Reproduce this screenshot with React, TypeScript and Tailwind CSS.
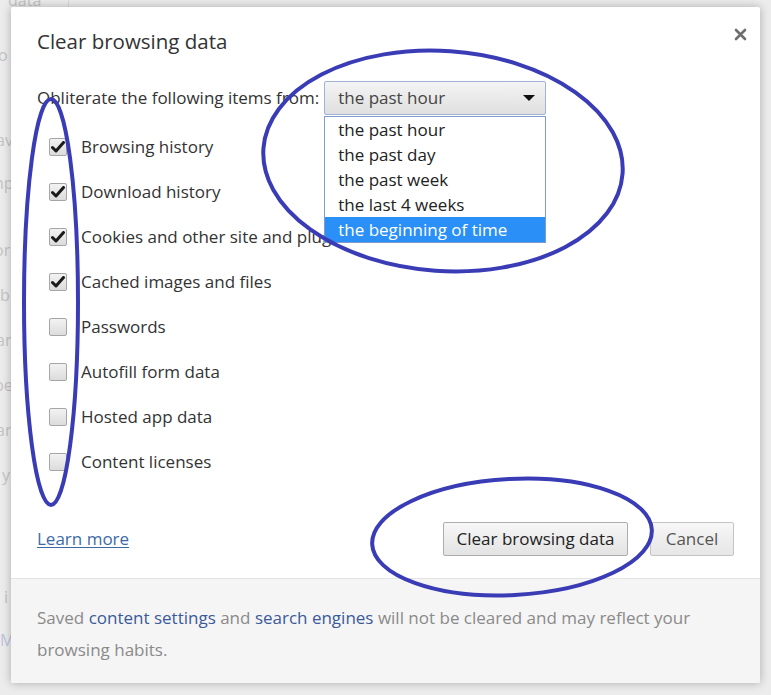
import React from "react";

const FONT = { fontFamily: '"Open Sans", "Noto Sans", sans-serif' };

function Check({ checked }: { checked: boolean }) {
  return (
    <div className="w-[18px] h-[18px] rounded-[2px] border border-[#a6a6a6] bg-gradient-to-b from-[#f2f2f2] to-[#dcdcdc] flex items-center justify-center shrink-0">
      {checked && (
        <svg width="14" height="12" viewBox="0 0 14 12">
          <path d="M1.5 6.5 L5 10 L12.5 1.5" fill="none" stroke="#1a1a1a" strokeWidth="3" strokeLinejoin="round" strokeLinecap="round" />
        </svg>
      )}
    </div>
  );
}

const items: [string, boolean][] = [
  ["Browsing history", true],
  ["Download history", true],
  ["Cookies and other site and plugin data", true],
  ["Cached images and files", true],
  ["Passwords", false],
  ["Autofill form data", false],
  ["Hosted app data", false],
  ["Content licenses", false],
];

const options = ["the past hour", "the past day", "the past week", "the last 4 weeks", "the beginning of time"];

export default function App() {
  return (
    <div className="relative w-[771px] h-[695px] overflow-hidden bg-[#ececec]" style={FONT}>
      {/* page behind */}
      <div className="flex flex-col text-[16px] text-[#c4c4c4] leading-[20px]">
        <div className="flex h-[8px] items-end">
          <span className="ml-[8px] -mb-[2px]">data</span>
          <span className="ml-[27px] w-px h-[8px] bg-[#d8d8d8]" />
        </div>
        <div className="mt-[37px] -ml-[2px]">o</div>
        <div className="mt-[65px] -ml-[4px]">av</div>
        <div className="mt-[23px] -ml-[6px]">np</div>
        <div className="mt-[47px] -ml-[6px]">or</div>
        <div className="mt-[25px] -ml-[4px]">ib</div>
        <div className="mt-[25px] -ml-[4px]">ar</div>
        <div className="mt-[25px] -ml-[6px]">be</div>
        <div className="mt-[25px] -ml-[4px]">ar</div>
        <div className="mt-[25px] ml-[2px]">y</div>
        <div className="mt-[102px] ml-[4px]">i</div>
        <div className="mt-[23px] text-[#bcc4de]">M</div>
      </div>

      {/* dialog */}
      <div className="absolute left-[11px] top-[7px] w-[749px] h-[676px] bg-white rounded-[2px] shadow-[0_0_10px_rgba(0,0,0,0.28)] flex flex-col text-[#333]">
        <div className="flex justify-between items-start pl-[26px] pr-[13px] pt-[20px]">
          <div className="text-[20.5px] leading-[28px] text-[#333]">Clear browsing data</div>
          <svg width="13" height="13" viewBox="0 0 13 13" className="mt-[1px]">
            <path d="M2 2 L11 11 M11 2 L2 11" stroke="#6e6e6e" strokeWidth="2.6" strokeLinecap="round" />
          </svg>
        </div>

        <div className="flex items-center pl-[26px] mt-[26px] text-[17px]">
          <span className="text-[#333]">Obliterate the following items from:</span>
          <div className="relative ml-[5px]">
            <div className="w-[222px] h-[34px] border border-[#9fb3d6] rounded-[2px] bg-gradient-to-b from-[#f4f4f4] to-[#dfdfdf] flex items-center justify-between pl-[13px] pr-[9px] text-[#444]">
              <span>the past hour</span>
              <svg width="14" height="8" viewBox="0 0 14 8">
                <path d="M1 1 L13 1 L7 7 Z" fill="#111" />
              </svg>
            </div>
            <div className="absolute left-0 top-[35px] w-[222px] bg-white border border-[#7f9bc8] flex flex-col z-10">
              {options.map((o, i) => (
                <div
                  key={o}
                  className={
                    i === 4
                      ? "h-[25px] leading-[25px] pl-[13px] bg-[#2a8ff7] text-white"
                      : "h-[25px] leading-[25px] pl-[13px] text-[#222]"
                  }
                >
                  {o}
                </div>
              ))}
            </div>
          </div>
        </div>

        <div className="flex flex-col pl-[38px] mt-[9px] text-[17px]">
          {items.map(([label, c]) => (
            <div key={label} className="flex items-center h-[45px] gap-[14px]">
              <Check checked={c} />
              <span className="text-[#333] whitespace-nowrap">{label}</span>
            </div>
          ))}
        </div>

        <div className="flex items-center justify-between pl-[26px] pr-[26px] mt-[38px] text-[17px]">
          <a className="text-[#3d6aa7] underline underline-offset-2">Learn more</a>
          <div className="flex gap-[22px]">
            <button className="h-[34px] w-[185px] border border-[#adadad] rounded-[2px] bg-gradient-to-b from-[#f7f7f7] to-[#e3e3e3] text-[#222]">
              Clear browsing data
            </button>
            <button className="h-[34px] w-[84px] border border-[#c4c4c4] rounded-[2px] bg-gradient-to-b from-[#f7f7f7] to-[#e6e6e6] text-[#555]">
              Cancel
            </button>
          </div>
        </div>

        <div className="mt-auto h-[105px] border-t border-[#e4e4e4] bg-[#f5f5f5] pl-[26px] pr-[40px] pt-[23px] text-[17px] leading-[32px] text-[#8a8a8a] rounded-b-[2px]">
          Saved <span className="text-[#3a5a9a]">content settings</span> and{" "}
          <span className="text-[#3a5a9a]">search engines</span> will not be cleared and may reflect your browsing habits.
        </div>
      </div>

      {/* hand-drawn annotations */}
      <svg className="absolute inset-0 pointer-events-none z-20" width="771" height="695" viewBox="0 0 771 695">
        <g fill="none" stroke="#3a3cb6" strokeWidth="4">
          <ellipse cx="443" cy="161" rx="180" ry="110" transform="rotate(4 443 161)" />
          <ellipse cx="51" cy="302" rx="27" ry="203" />
          <ellipse cx="512" cy="537" rx="140" ry="58" transform="rotate(-3 512 537)" />
        </g>
      </svg>
    </div>
  );
}
